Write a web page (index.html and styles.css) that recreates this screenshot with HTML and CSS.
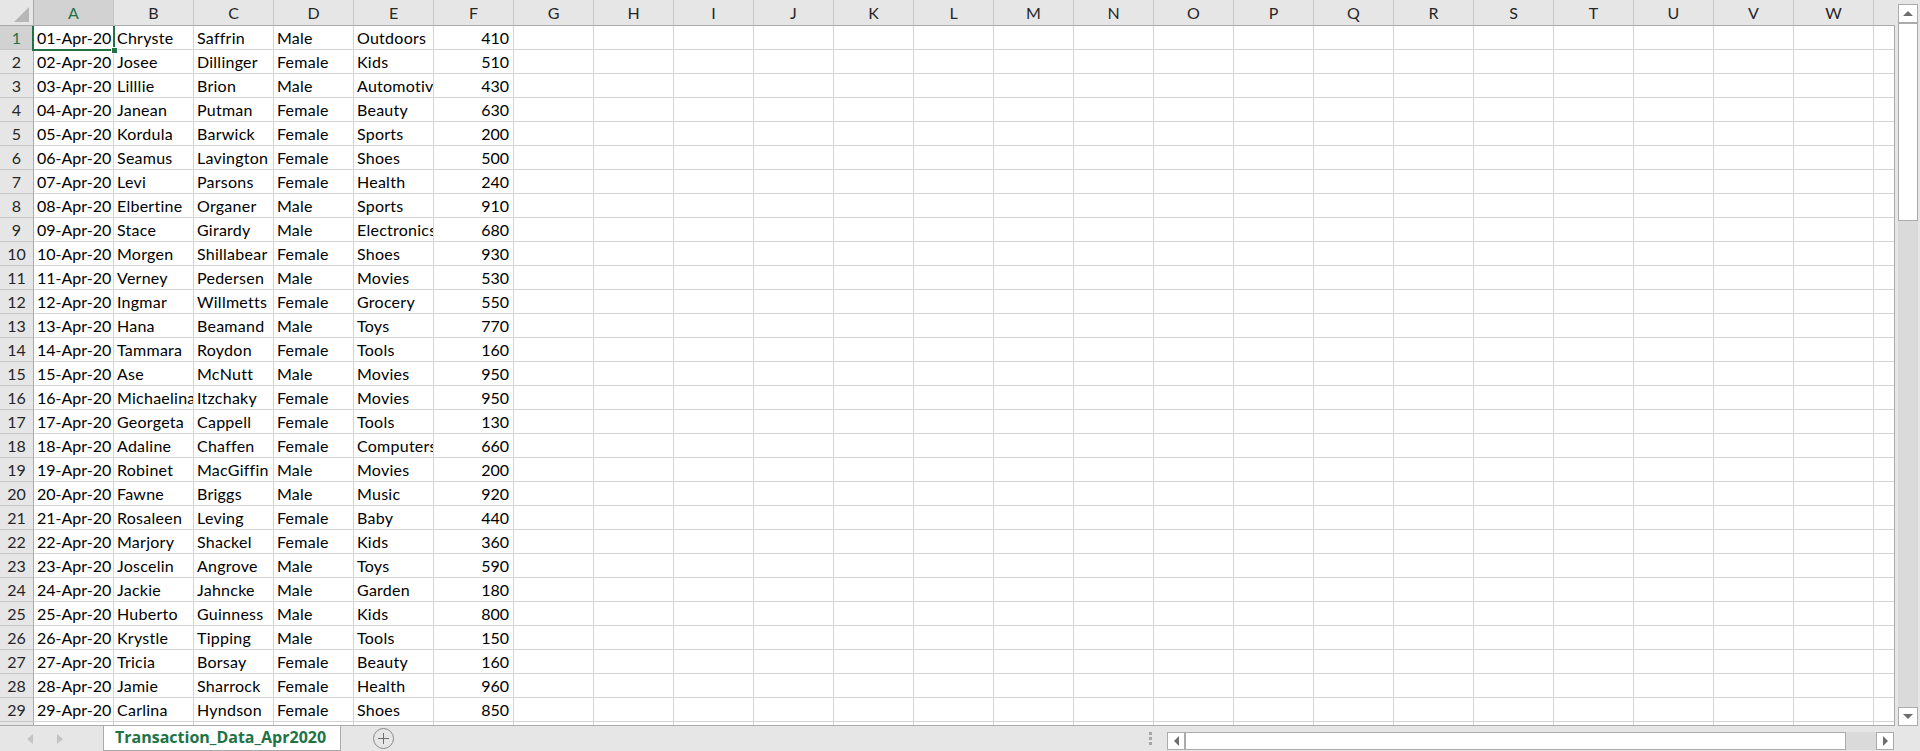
FILE: index.html
```html
<!DOCTYPE html>
<html lang="en">
<head>
<meta charset="utf-8">
<title>Transaction_Data_Apr2020</title>
<link rel="stylesheet" href="styles.css">
</head>
<body>
<div class="app">
  <div class="main">
    <div class="sheet">
      <div class="colhead">
        <div class="corner"><span class="tri"></span></div>
        <div class="ch selh">A</div><div class="ch">B</div><div class="ch">C</div><div class="ch">D</div><div class="ch">E</div><div class="ch">F</div><div class="ch">G</div><div class="ch">H</div><div class="ch">I</div><div class="ch">J</div><div class="ch">K</div><div class="ch">L</div><div class="ch">M</div><div class="ch">N</div><div class="ch">O</div><div class="ch">P</div><div class="ch">Q</div><div class="ch">R</div><div class="ch">S</div><div class="ch">T</div><div class="ch">U</div><div class="ch">V</div><div class="ch">W</div><div class="ch last"></div>
      </div>
      <div class="body">
        <div class="row"><div class="rh selh">1</div><div class="c sel">01-Apr-20<span class="selbox"><span class="handle"></span></span></div><div class="c t">Chryste</div><div class="c t">Saffrin</div><div class="c t">Male</div><div class="c t">Outdoors</div><div class="c n">410</div><div class="rest"></div></div>
        <div class="row"><div class="rh">2</div><div class="c">02-Apr-20</div><div class="c t">Josee</div><div class="c t">Dillinger</div><div class="c t">Female</div><div class="c t">Kids</div><div class="c n">510</div><div class="rest"></div></div>
        <div class="row"><div class="rh">3</div><div class="c">03-Apr-20</div><div class="c t">Lilllie</div><div class="c t">Brion</div><div class="c t">Male</div><div class="c t">Automotive</div><div class="c n">430</div><div class="rest"></div></div>
        <div class="row"><div class="rh">4</div><div class="c">04-Apr-20</div><div class="c t">Janean</div><div class="c t">Putman</div><div class="c t">Female</div><div class="c t">Beauty</div><div class="c n">630</div><div class="rest"></div></div>
        <div class="row"><div class="rh">5</div><div class="c">05-Apr-20</div><div class="c t">Kordula</div><div class="c t">Barwick</div><div class="c t">Female</div><div class="c t">Sports</div><div class="c n">200</div><div class="rest"></div></div>
        <div class="row"><div class="rh">6</div><div class="c">06-Apr-20</div><div class="c t">Seamus</div><div class="c t">Lavington</div><div class="c t">Female</div><div class="c t">Shoes</div><div class="c n">500</div><div class="rest"></div></div>
        <div class="row"><div class="rh">7</div><div class="c">07-Apr-20</div><div class="c t">Levi</div><div class="c t">Parsons</div><div class="c t">Female</div><div class="c t">Health</div><div class="c n">240</div><div class="rest"></div></div>
        <div class="row"><div class="rh">8</div><div class="c">08-Apr-20</div><div class="c t">Elbertine</div><div class="c t">Organer</div><div class="c t">Male</div><div class="c t">Sports</div><div class="c n">910</div><div class="rest"></div></div>
        <div class="row"><div class="rh">9</div><div class="c">09-Apr-20</div><div class="c t">Stace</div><div class="c t">Girardy</div><div class="c t">Male</div><div class="c t">Electronics</div><div class="c n">680</div><div class="rest"></div></div>
        <div class="row"><div class="rh">10</div><div class="c">10-Apr-20</div><div class="c t">Morgen</div><div class="c t">Shillabear</div><div class="c t">Female</div><div class="c t">Shoes</div><div class="c n">930</div><div class="rest"></div></div>
        <div class="row"><div class="rh">11</div><div class="c">11-Apr-20</div><div class="c t">Verney</div><div class="c t">Pedersen</div><div class="c t">Male</div><div class="c t">Movies</div><div class="c n">530</div><div class="rest"></div></div>
        <div class="row"><div class="rh">12</div><div class="c">12-Apr-20</div><div class="c t">Ingmar</div><div class="c t">Willmetts</div><div class="c t">Female</div><div class="c t">Grocery</div><div class="c n">550</div><div class="rest"></div></div>
        <div class="row"><div class="rh">13</div><div class="c">13-Apr-20</div><div class="c t">Hana</div><div class="c t">Beamand</div><div class="c t">Male</div><div class="c t">Toys</div><div class="c n">770</div><div class="rest"></div></div>
        <div class="row"><div class="rh">14</div><div class="c">14-Apr-20</div><div class="c t">Tammara</div><div class="c t">Roydon</div><div class="c t">Female</div><div class="c t">Tools</div><div class="c n">160</div><div class="rest"></div></div>
        <div class="row"><div class="rh">15</div><div class="c">15-Apr-20</div><div class="c t">Ase</div><div class="c t">McNutt</div><div class="c t">Male</div><div class="c t">Movies</div><div class="c n">950</div><div class="rest"></div></div>
        <div class="row"><div class="rh">16</div><div class="c">16-Apr-20</div><div class="c t">Michaelina</div><div class="c t">Itzchaky</div><div class="c t">Female</div><div class="c t">Movies</div><div class="c n">950</div><div class="rest"></div></div>
        <div class="row"><div class="rh">17</div><div class="c">17-Apr-20</div><div class="c t">Georgeta</div><div class="c t">Cappell</div><div class="c t">Female</div><div class="c t">Tools</div><div class="c n">130</div><div class="rest"></div></div>
        <div class="row"><div class="rh">18</div><div class="c">18-Apr-20</div><div class="c t">Adaline</div><div class="c t">Chaffen</div><div class="c t">Female</div><div class="c t">Computers</div><div class="c n">660</div><div class="rest"></div></div>
        <div class="row"><div class="rh">19</div><div class="c">19-Apr-20</div><div class="c t">Robinet</div><div class="c t">MacGiffin</div><div class="c t">Male</div><div class="c t">Movies</div><div class="c n">200</div><div class="rest"></div></div>
        <div class="row"><div class="rh">20</div><div class="c">20-Apr-20</div><div class="c t">Fawne</div><div class="c t">Briggs</div><div class="c t">Male</div><div class="c t">Music</div><div class="c n">920</div><div class="rest"></div></div>
        <div class="row"><div class="rh">21</div><div class="c">21-Apr-20</div><div class="c t">Rosaleen</div><div class="c t">Leving</div><div class="c t">Female</div><div class="c t">Baby</div><div class="c n">440</div><div class="rest"></div></div>
        <div class="row"><div class="rh">22</div><div class="c">22-Apr-20</div><div class="c t">Marjory</div><div class="c t">Shackel</div><div class="c t">Female</div><div class="c t">Kids</div><div class="c n">360</div><div class="rest"></div></div>
        <div class="row"><div class="rh">23</div><div class="c">23-Apr-20</div><div class="c t">Joscelin</div><div class="c t">Angrove</div><div class="c t">Male</div><div class="c t">Toys</div><div class="c n">590</div><div class="rest"></div></div>
        <div class="row"><div class="rh">24</div><div class="c">24-Apr-20</div><div class="c t">Jackie</div><div class="c t">Jahncke</div><div class="c t">Male</div><div class="c t">Garden</div><div class="c n">180</div><div class="rest"></div></div>
        <div class="row"><div class="rh">25</div><div class="c">25-Apr-20</div><div class="c t">Huberto</div><div class="c t">Guinness</div><div class="c t">Male</div><div class="c t">Kids</div><div class="c n">800</div><div class="rest"></div></div>
        <div class="row"><div class="rh">26</div><div class="c">26-Apr-20</div><div class="c t">Krystle</div><div class="c t">Tipping</div><div class="c t">Male</div><div class="c t">Tools</div><div class="c n">150</div><div class="rest"></div></div>
        <div class="row"><div class="rh">27</div><div class="c">27-Apr-20</div><div class="c t">Tricia</div><div class="c t">Borsay</div><div class="c t">Female</div><div class="c t">Beauty</div><div class="c n">160</div><div class="rest"></div></div>
        <div class="row"><div class="rh">28</div><div class="c">28-Apr-20</div><div class="c t">Jamie</div><div class="c t">Sharrock</div><div class="c t">Female</div><div class="c t">Health</div><div class="c n">960</div><div class="rest"></div></div>
        <div class="row"><div class="rh">29</div><div class="c">29-Apr-20</div><div class="c t">Carlina</div><div class="c t">Hyndson</div><div class="c t">Female</div><div class="c t">Shoes</div><div class="c n">850</div><div class="rest"></div></div>
        <div class="row"><div class="rh"></div><div class="c"></div><div class="c"></div><div class="c"></div><div class="c"></div><div class="c"></div><div class="c n"></div><div class="rest"></div></div>
      </div>
    </div>
    <div class="vscroll">
      <div class="sbtn"><span class="arr up"></span></div>
      <div class="vthumb"></div>
      <div class="vtrack"></div>
      <div class="sbtn"><span class="arr down"></span></div>
    </div>
  </div>
  <div class="tabbar">
    <div class="nav"><span class="navarr left"></span><span class="navarr right"></span></div>
    <div class="tab">Transaction_Data_Apr2020</div>
    <div class="add"><span class="plus-h"></span><span class="plus-v"></span></div>
    <div class="spacer"></div>
    <div class="divider"><span></span><span></span><span></span></div>
    <div class="hscroll">
      <div class="hbtn"><span class="arr left"></span></div>
      <div class="hthumb"></div>
      <div class="htrack"></div>
      <div class="hbtn"><span class="arr right"></span></div>
    </div>
  </div>
</div>
</body>
</html>
```
FILE: styles.css
```css
* { box-sizing: border-box; }

body {
  margin: 0;
  width: 1920px;
  height: 751px;
  overflow: hidden;
  background: #e6e6e6;
  font-family: Lato, "Liberation Sans", sans-serif;
  color: #000;
}

.app {
  display: flex;
  flex-direction: column;
  height: 751px;
}

.main {
  display: flex;
  height: 726px;
}

.sheet {
  width: 1895px;
  display: flex;
  flex-direction: column;
}

/* column headers */
.colhead {
  display: grid;
  grid-template-columns: 34px repeat(23, 80px) 21px;
  height: 26px;
  background: #e6e6e6;
}

.colhead > div {
  border-right: 1px solid #c6c6c6;
  border-bottom: 1px solid #ababab;
  text-align: center;
  line-height: 25px;
  font-size: 16px;
  color: #262626;
}

.colhead .corner {
  position: relative;
  border-right: 1px solid #ababab;
}

.corner .tri {
  position: absolute;
  right: 4px;
  bottom: 3px;
  width: 0;
  height: 0;
  border-left: 15px solid transparent;
  border-bottom: 15px solid #b7b7b7;
}

.colhead .last {
  border-right: none;
}

.selh {
  background: #d2d2d2 !important;
  color: #217346 !important;
}

/* body */
.body {
  flex: 1;
  overflow: hidden;
  background: #fff;
  border-right: 1px solid #ababab;
  border-bottom: 1px solid #ababab;
}

.row {
  display: grid;
  grid-template-columns: 34px repeat(6, 80px) 1fr;
  height: 24px;
}

.rh {
  background: #e6e6e6;
  border-right: 1px solid #ababab;
  border-bottom: 1px solid #c6c6c6;
  text-align: center;
  line-height: 23px;
  font-size: 16px;
  color: #262626;
}

.c {
  border-right: 1px solid #d4d4d4;
  border-bottom: 1px solid #d4d4d4;
  padding: 0 3px;
  line-height: 23px;
  font-size: 16px;
  white-space: nowrap;
  overflow: hidden;
}

.c.t {
  letter-spacing: 0.25px;
}

.c.n {
  text-align: right;
  padding-right: 4px;
}

.c.sel {
  position: relative;
  overflow: visible;
}

.selbox {
  position: absolute;
  left: -2px;
  top: -2px;
  width: 83px;
  height: 27px;
  border: 2px solid #217346;
  z-index: 2;
}

.handle {
  position: absolute;
  right: -5px;
  bottom: -5px;
  width: 7px;
  height: 7px;
  background: #217346;
  border: 1px solid #fff;
}

.rest {
  border-bottom: 1px solid #d4d4d4;
  background: repeating-linear-gradient(to right, transparent 0 79px, #d4d4d4 79px 80px);
}

/* vertical scrollbar */
.vscroll {
  width: 25px;
  display: flex;
  flex-direction: column;
  padding: 4px 2px 0 3px;
}

.sbtn {
  height: 19px;
  background: #fff;
  border: 1px solid #ababab;
  display: flex;
  align-items: center;
  justify-content: center;
}

.vthumb {
  height: 198px;
  background: #fff;
  border: 1px solid #ababab;
}

.vtrack {
  flex: 1;
  background: #dadada;
}

.arr {
  width: 0;
  height: 0;
}

.arr.up {
  border-left: 5px solid transparent;
  border-right: 5px solid transparent;
  border-bottom: 5px solid #6e6e6e;
}

.arr.down {
  border-left: 5px solid transparent;
  border-right: 5px solid transparent;
  border-top: 5px solid #6e6e6e;
}

.arr.left {
  border-top: 5px solid transparent;
  border-bottom: 5px solid transparent;
  border-right: 5px solid #6e6e6e;
}

.arr.right {
  border-top: 5px solid transparent;
  border-bottom: 5px solid transparent;
  border-left: 5px solid #6e6e6e;
}

/* tab bar */
.tabbar {
  display: flex;
  height: 25px;
}

.nav {
  width: 103px;
  display: flex;
  align-items: center;
  padding-left: 27px;
  gap: 24px;
}

.navarr {
  width: 0;
  height: 0;
  border-top: 5px solid transparent;
  border-bottom: 5px solid transparent;
}

.navarr.left {
  border-right: 6px solid #c4c4c4;
}

.navarr.right {
  border-left: 6px solid #c4c4c4;
}

.tab {
  width: 238px;
  background: #fff;
  border-left: 1px solid #ababab;
  border-right: 1px solid #ababab;
  border-bottom: 1px solid #ababab;
  padding-left: 11px;
  font-family: "Open Sans", "Noto Sans", sans-serif;
  font-weight: 700;
  font-size: 16px;
  line-height: 23px;
  color: #217346;
  white-space: nowrap;
}

.add {
  position: relative;
  margin-left: 32px;
  align-self: center;
  width: 21px;
  height: 21px;
  border: 1px solid #8a8a8a;
  border-radius: 50%;
}

.plus-h, .plus-v {
  position: absolute;
  background: #6e6e6e;
}

.plus-h {
  left: 4px;
  right: 4px;
  top: 9px;
  height: 1px;
}

.plus-v {
  top: 4px;
  bottom: 4px;
  left: 9px;
  width: 1px;
}

.spacer {
  flex: 1;
}

.divider {
  width: 3px;
  margin-right: 15px;
  display: flex;
  flex-direction: column;
  justify-content: center;
  gap: 2px;
}

.divider span {
  height: 3px;
  background: #a6a6a6;
}

.hscroll {
  width: 727px;
  height: 18px;
  margin-top: 6px;
  margin-right: 26px;
  display: flex;
}

.hbtn {
  width: 18px;
  background: #fff;
  border: 1px solid #ababab;
  display: flex;
  align-items: center;
  justify-content: center;
}

.hthumb {
  width: 661px;
  background: #fff;
  border: 1px solid #ababab;
}

.htrack {
  flex: 1;
  background: #dadada;
}
```
